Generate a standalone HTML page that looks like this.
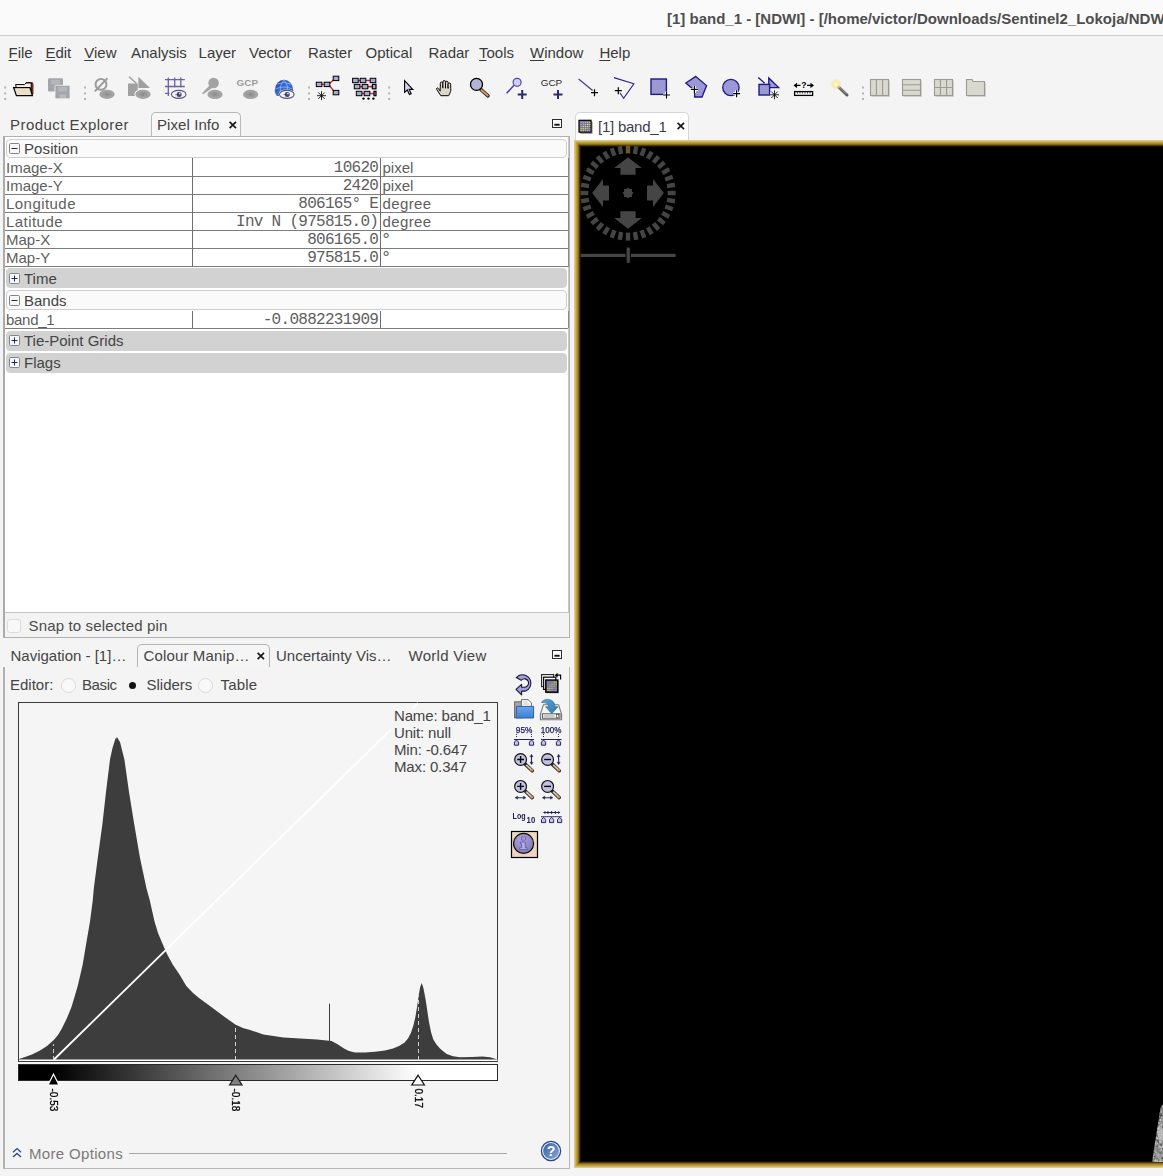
<!DOCTYPE html>
<html>
<head>
<meta charset="utf-8">
<title>SNAP</title>
<style>
html,body{margin:0;padding:0;}
body{width:1163px;height:1176px;overflow:hidden;background:#f4f4f4;font-family:"Liberation Sans",sans-serif;font-size:15px;color:#3a3a3a;position:relative;}
.a{position:absolute;}
.t{position:absolute;white-space:nowrap;line-height:18px;height:18px;}
.m{font-family:"Liberation Mono",monospace;font-size:16px;letter-spacing:-0.72px;margin-top:0.5px;margin-right:0.8px;}
u{text-decoration:underline;text-underline-offset:2px;text-decoration-thickness:1px;}
/* title */
#titlebar{left:0;top:0;width:1163px;height:35px;background:#fafafa;border-bottom:1px solid #cdcdcd;}
#title{left:667px;top:9.5px;font-weight:bold;font-size:15px;color:#4e4e4e;}
/* menu */
.mi{top:43.8px;color:#3a3a3a;}
/* panels */
.panel{border:1px solid #b4b4b4;box-sizing:border-box;}
.hdr{position:absolute;left:6px;width:561px;box-sizing:border-box;border-radius:4px;}
.hdr.w{background:#fafafa;border:1px solid #cfcfcf;}
.hdr.g{background:#d2d2d2;border:1px solid #d2d2d2;}
.row{position:absolute;left:5px;width:563px;height:18px;box-sizing:border-box;border-bottom:1px solid #7d7d7d;background:#fff;}
.lbl{color:#5e5e5e;}
</style>
</head>
<body>
<!-- TITLE -->
<div class="a" id="titlebar"></div>
<div class="t" id="title">[1] band_1 - [NDWI] - [/home/victor/Downloads/Sentinel2_Lokoja/NDWI</div>

<!-- MENU -->
<div id="menu">
<div class="t mi" style="left:8.5px"><u>F</u>ile</div>
<div class="t mi" style="left:45.4px"><u>E</u>dit</div>
<div class="t mi" style="left:84.3px"><u>V</u>iew</div>
<div class="t mi" style="left:131px">Analysis</div>
<div class="t mi" style="left:198.6px">Layer</div>
<div class="t mi" style="left:249px">Vector</div>
<div class="t mi" style="left:308px">Raster</div>
<div class="t mi" style="left:365.6px">Optical</div>
<div class="t mi" style="left:428.5px">Radar</div>
<div class="t mi" style="left:479px"><u>T</u>ools</div>
<div class="t mi" style="left:530px"><u>W</u>indow</div>
<div class="t mi" style="left:599.4px"><u>H</u>elp</div>
</div>

<!-- TOOLBAR -->
<div id="toolbar">
<svg class="a" style="left:0;top:66px" width="1163" height="46" viewBox="0 66 1163 46">
<defs>
<g id="grip"><rect x="-1" y="86.5" width="2" height="2" fill="#b4b4b4"/><rect x="-1" y="92.5" width="2" height="2" fill="#b4b4b4"/><rect x="-1" y="98" width="2" height="2" fill="#b4b4b4"/></g>
<g id="eyeG"><ellipse cx="0" cy="0" rx="7.6" ry="4.6" fill="#a4a4a4"/><ellipse cx="0" cy="0" rx="4.6" ry="2.4" fill="#9a9a9a"/><circle cx="0" cy="0" r="1.6" fill="#8e8e8e"/></g>
<g id="eyeC"><ellipse cx="0" cy="0" rx="7.3" ry="4" fill="#f4f4fa" stroke="#55557a" stroke-width="1.1"/><circle cx="0.4" cy="0" r="2.5" fill="#44446a"/><circle cx="-2.8" cy="0.2" r="0.6" fill="#55557a"/><circle cx="1.1" cy="-0.8" r="0.9" fill="#d4d4ea"/></g>
<g id="plusB"><path d="M-4.5 0H4.5M0 -4.5V4.5" stroke="#2a286e" stroke-width="2" fill="none"/></g>
<g id="plusK"><path d="M-3.5 0H3.5M0 -3.5V3.5" stroke="#fff" stroke-width="3" fill="none"/><path d="M-3.5 0H3.5M0 -3.5V3.5" stroke="#000" stroke-width="1.2" fill="none"/></g>
<g id="plusT"><path d="M-3.5 0H3.5M0 -3.5V3.5" stroke="#000" stroke-width="1.2" fill="none"/></g>
<g id="ast"><path d="M-4.5 0H4.5M0 -4.5V4.5M-3.2 -3.2L3.2 3.2M-3.2 3.2L3.2 -3.2" stroke="#000" stroke-width="0.85" fill="none"/></g>
<g id="node"><rect x="0" y="0" width="5.6" height="4.4" fill="#a8a8d4" stroke="#000" stroke-width="1"/></g>
<radialGradient id="wg"><stop offset="0" stop-color="#fffbe0"/><stop offset="0.45" stop-color="#fbe9a0" stop-opacity="0.9"/><stop offset="1" stop-color="#f8e090" stop-opacity="0"/></radialGradient>
<linearGradient id="globe" x1="0" y1="0" x2="1" y2="1"><stop offset="0" stop-color="#1c3c9c"/><stop offset="0.55" stop-color="#3f74dc"/><stop offset="1" stop-color="#1a3aa0"/></linearGradient>
</defs>
<use href="#grip" x="5.2"/><use href="#grip" x="85"/><use href="#grip" x="309"/><use href="#grip" x="389.2"/><use href="#grip" x="863"/>
<!-- open folder -->
<g>
<path d="M26 82.600h6.200l0.800 0.800v10.800h-2.500z" fill="#9a3030" stroke="#4a1010" stroke-width="0.800"/>
<path d="M15.600 84.600h8.800l1.600 -1.600h5.200v11.400h-13.600z" fill="#f8f2e2" stroke="#000" stroke-width="1"/>
<path d="M13.600 87.600h16.400l2.400 8h-16z" fill="#e2d2b4" stroke="#000" stroke-width="1.200"/>
<path d="M15.400 89h13.600M15.900 90.800h13.600M16.500 92.600h13.600M17 94.300h13.600" stroke="#faf4e6" stroke-width="0.700"/>
</g>
<!-- disks grey -->
<g fill="#a2a6aa">
<rect x="48" y="78.3" width="15" height="13.2" rx="1.2"/>
<rect x="55" y="85.3" width="15" height="13.5" rx="1.2" stroke="#f4f4f4" stroke-width="0.8"/>
<rect x="51" y="79.8" width="9" height="4.6" fill="#b4b7ba"/>
<rect x="58.2" y="87" width="9" height="4.6" fill="#b4b7ba"/>
<rect x="59.5" y="94.5" width="6.5" height="3.4" fill="#b8bbbd"/>
</g>
<!-- nodata overlay (grey) -->
<g stroke="#9c9c9c" fill="none" stroke-width="2"><circle cx="101" cy="84.4" r="5.4"/><path d="M94.8 91.4L107.4 78.2"/></g>
<use href="#eyeG" x="107" y="94.3"/>
<!-- no-data 2 grey -->
<g fill="#a0a0a0"><path d="M128 83.5h9.8v12.5h-9.8z"/><path d="M138.4 76.8L150 88h-11.6z"/><path d="M128.6 77.2l1-1L137 83l-1 1z"/></g>
<ellipse cx="143" cy="94.3" rx="8.6" ry="5.6" fill="#f4f4f4"/><use href="#eyeG" x="143" y="94.3"/>
<!-- graticule + eye -->
<g stroke="#6a62a0" stroke-width="1.3" fill="none"><path d="M168.3 77.5V96M174.7 77.5V87.5M180.8 77.5V87.5M165 79.7H184.8M165 86.5H184.8M165 93.4H169.5"/></g>
<use href="#eyeC" x="178.7" y="94.4"/>
<!-- pin + eye grey -->
<g fill="#a2a2a2"><circle cx="213.6" cy="83" r="5.3"/><path d="M209.5 85.5l2.6 2.4l-9 6.3l-1 -1z"/></g>
<use href="#eyeG" x="215" y="94.4"/>
<!-- GCP + eye grey -->
<text x="236.6" y="85.6" font-family="Liberation Sans, sans-serif" font-size="9.4" font-weight="bold" fill="#9c9c9c" textLength="21.4" lengthAdjust="spacingAndGlyphs">GCP</text>
<use href="#eyeG" x="250.6" y="94.4"/>
<!-- world + eye -->
<path d="M274.8 90.5a9.2 10.8 0 0 1 18.4 0c0 2 -1 4 -2 5.5h-14.4c-1 -1.5 -2 -3.5 -2 -5.5z" fill="url(#globe)"/>
<path d="M277 84q7 -3 14 0M275.5 89q8.5 -4 17 0M284 79.5q-5 6 -4 14M284 79.5q5 6 4 14" stroke="#9cc0f4" stroke-width="0.7" fill="none"/>
<ellipse cx="286.8" cy="94.4" rx="8.2" ry="5" fill="#f4f4f4"/><use href="#eyeC" x="286.8" y="94.4"/>
<!-- graph builder -->
<g stroke="#c43030" stroke-width="1.4" fill="none"><path d="M319 84.4H327M329 84L335 78.5M329 85L335 92.5"/></g>
<use href="#node" x="316.3" y="82.2"/><use href="#node" x="324.2" y="82.2"/><use href="#node" x="333.2" y="76.2"/><use href="#node" x="333.2" y="90.4"/>
<use href="#ast" x="321.5" y="95.7"/>
<!-- batch -->
<g stroke="#c43030" stroke-width="1.6" fill="none"><path d="M355 80.5H374M357 86.6H375M359 93.5H375"/></g>
<use href="#node" x="352.6" y="78.3"/><use href="#node" x="360.2" y="78.3"/><use href="#node" x="370.2" y="78.3"/>
<use href="#node" x="354.3" y="84.4"/><use href="#node" x="362.2" y="84.4"/><rect x="372.4" y="84.4" width="3.6" height="4.4" fill="#a8a8d4" stroke="#000" stroke-width="1.2"/>
<use href="#node" x="356.3" y="91.3"/><use href="#node" x="364.2" y="91.3"/><rect x="374" y="91.3" width="2" height="4.4" fill="#a8a8d4" stroke="#000" stroke-width="1.2"/>
<g fill="#000"><circle cx="363.5" cy="98.6" r="1.2"/><circle cx="368.5" cy="98.6" r="1.2"/><circle cx="373.4" cy="98.6" r="1.2"/></g>
<!-- select arrow -->
<path d="M404.6 80.6V92.4L407.3 90L409.4 94.6L411.2 93.8L409.2 89.4H412.8z" fill="#d4d4f0" stroke="#000" stroke-width="1.1" stroke-linejoin="miter"/>
<!-- hand -->
<g fill="#ddd6c6" stroke="#000" stroke-width="1">
<rect x="440.300" y="82" width="2.600" height="9" rx="1.300"/><rect x="442.900" y="80.600" width="2.600" height="10" rx="1.300"/><rect x="445.500" y="81.200" width="2.600" height="10" rx="1.300"/><rect x="448.100" y="83" width="2.600" height="9" rx="1.300"/>
<path d="M440.300 87.500V91.200L438.300 88.400C437.500 87.300 436 88.200 436.700 89.400L440.800 95.700H448.600C450.200 93.200 450.700 91 450.700 88.500" />
</g>
<path d="M440.800 88h9.400v4h-9.400z" fill="#ddd6c6"/>
<path d="M442.900 86.500v2M445.500 86.500v2M448.100 87v2" stroke="#000" stroke-width="0.700" fill="none"/>
<!-- magnifier -->
<path d="M481 89.6L488 95.8" stroke="#403020" stroke-width="3.6" stroke-linecap="round"/>
<path d="M481.6 90.2L487.6 95.4" stroke="#d8a070" stroke-width="1.8" stroke-linecap="round"/>
<circle cx="476.5" cy="84.4" r="6" fill="#b4b4d8" stroke="#000" stroke-width="1.3"/>
<!-- pin + plus -->
<path d="M514 85.2L506.6 93.3" stroke="#4a449c" stroke-width="1.5"/>
<circle cx="517.1" cy="82.3" r="4" fill="#cfcff0" stroke="#504a9c" stroke-width="1.2"/>
<use href="#plusB" x="522.2" y="94.5"/>
<!-- GCP plus -->
<text x="540.8" y="85.6" font-family="Liberation Sans, sans-serif" font-size="9.4" fill="#2c2c2c" textLength="21.4" lengthAdjust="spacingAndGlyphs">GCP</text>
<use href="#plusB" x="558" y="94.5"/>
<!-- line -->
<path d="M578.6 79L592.6 90.6" stroke="#4a3f9c" stroke-width="1.3"/><use href="#plusT" x="594.5" y="92.7"/>
<!-- polyline -->
<path d="M613.9 77.6L633.9 83.8L623.6 98.2L619.9 92.8" stroke="#2a1f8c" stroke-width="1.1" fill="none"/><use href="#plusT" x="618.3" y="90.7"/>
<!-- rect -->
<rect x="651" y="79" width="15.4" height="15.4" fill="#9c98d6" stroke="#1f1a80" stroke-width="1.4"/><use href="#plusK" x="666.5" y="95"/>
<!-- polygon -->
<path d="M695.8 76.4L706.6 85.6L702 97H694.6V90.6L685.8 83z" fill="#9c98d6" stroke="#1f1a80" stroke-width="1.3"/><use href="#plusK" x="694.4" y="89.4"/>
<!-- ellipse -->
<circle cx="730.9" cy="87.5" r="8.2" fill="#9c98d6" stroke="#1f1a80" stroke-width="1.3"/><use href="#plusK" x="736.6" y="93.7"/>
<!-- magic -->
<path d="M758.3 77.6L764.6 83.2" stroke="#1f1a80" stroke-width="1.4"/>
<path d="M768.8 78L778.6 87.6H768.8z" fill="#9c98d6" stroke="#1f1a80" stroke-width="1.4"/>
<rect x="759" y="84.4" width="10.6" height="10.6" fill="#9c98d6" stroke="#1f1a80" stroke-width="1.4"/>
<circle cx="774.5" cy="94.8" r="4.6" fill="#f4f4f4"/><use href="#ast" x="774.5" y="94.8"/>
<!-- ruler -->
<g stroke="#000" fill="none"><path d="M794.5 85.4H800.5M807 85.4H813" stroke-width="1.2"/><path d="M797 83.4L794.4 85.4L797 87.4M810.5 83.4L813.1 85.4L810.5 87.4" stroke-width="1.1" fill="#000"/>
<rect x="794.6" y="91.6" width="18" height="3.8" fill="#fff" stroke-width="1.3"/><path d="M797.5 91.6v2M800 91.6v2M802.5 91.6v2M805 91.6v2M807.5 91.6v2M810 91.6v2" stroke-width="0.7"/></g>
<text x="801.2" y="88" font-family="Liberation Sans, sans-serif" font-size="8.5" font-weight="bold" fill="#000">?</text>
<!-- wand -->
<path d="M838.6 87L847 95" stroke="#5a5a5a" stroke-width="3" stroke-linecap="round"/><path d="M838.6 86.4L846.6 94" stroke="#a8a8a8" stroke-width="1"/>
<circle cx="836" cy="84.4" r="6" fill="url(#wg)"/>
<!-- tiles -->
<g fill="#000" opacity="0.13"><rect x="871.5" y="80.5" width="18.5" height="16.5"/><rect x="903.5" y="80.5" width="18.5" height="16.5"/><rect x="935.5" y="80.5" width="18.5" height="16.5"/><rect x="967.5" y="82.5" width="18.5" height="14.5"/></g>
<g fill="#d9d9ce" stroke="#9a9a96" stroke-width="1.1">
<rect x="870.5" y="79.5" width="18" height="16"/><path d="M876.4 79.5v16M882.6 79.5v16" fill="none"/>
<rect x="902.5" y="79.5" width="18" height="16"/><path d="M902.5 84.8h18M902.5 90.2h18" fill="none"/>
<rect x="934.5" y="79.5" width="18" height="16"/><path d="M940.4 79.5v16M946.6 79.5v16M934.5 87.5h18" fill="none"/>
<path d="M966.5 79.5h5.5l1.2 2h11.3v14h-18z"/>
</g>
</svg>
</div>

<!-- LEFT TOP PANEL -->
<div id="lefttop">
<!-- tabs -->
<div class="t" style="left:10px;top:115.5px;color:#444;letter-spacing:0.46px">Product Explorer</div>
<div class="a" style="left:151px;top:112px;width:90px;height:26px;box-sizing:border-box;border:1px solid #b9b9b9;border-bottom:none;border-radius:5px 5px 0 0;background:#f7f7f7"></div>
<div class="t" style="left:157px;top:115.5px;color:#444;letter-spacing:0.08px">Pixel Info</div>
<svg class="a" style="left:228px;top:120px" width="10" height="10" viewBox="0 0 10 10"><path d="M1.6 1.8L8 8.2M8 1.8L1.6 8.2" stroke="#1a1a1a" stroke-width="1.7"/></svg>
<svg class="a" style="left:552px;top:118px" width="12" height="12" viewBox="0 0 12 12"><rect x="0.5" y="1.5" width="9" height="8" fill="#fbfbfb" stroke="#2c2c2c" stroke-width="1"/><rect x="2.4" y="5.8" width="5.2" height="1.9" fill="#111"/></svg>
<!-- panel frame -->
<div class="a" style="left:3px;top:136px;width:567px;height:502px;box-sizing:border-box;border:1px solid #b2b2b2;border-left:2px solid #ababab;background:#f3f3f3"></div>
<div class="a" style="left:5px;top:137px;width:564px;height:476px;background:#fff;border-bottom:1px solid #c4c4c4;border-right:1px solid #c9c9c9;box-sizing:border-box"></div>
<!-- Position header -->
<div class="hdr w" style="top:138.5px;height:19px"></div>
<svg class="a" style="left:9px;top:143px" width="11" height="11" viewBox="0 0 11 11"><rect x="0.5" y="0.5" width="10" height="10" rx="1.2" fill="#f6f6fb" stroke="#858585"/><path d="M2.5 5.5H8.5" stroke="#1c2a5a" stroke-width="1"/></svg>
<div class="t" style="left:24px;top:139.5px;color:#444;letter-spacing:0.1px">Position</div>
<!-- rows -->
<div class="a" style="left:5px;top:158px;width:563px;height:1px;background:#fff"></div>
<div class="row" style="top:159px"></div><div class="row" style="top:177px"></div><div class="row" style="top:195px"></div><div class="row" style="top:213px"></div><div class="row" style="top:231px"></div><div class="row" style="top:249px"></div>
<div class="a" style="left:192px;top:158px;width:1px;height:109px;background:#6e6e6e"></div>
<div class="a" style="left:380px;top:158px;width:1px;height:109px;background:#6e6e6e"></div>
<div class="a" style="left:567.5px;top:158px;width:1px;height:109px;background:#8a8a8a"></div>
<div class="t lbl" style="left:6px;top:158.6px">Image-X</div>
<div class="t lbl" style="left:6px;top:176.6px">Image-Y</div>
<div class="t lbl" style="left:6px;top:194.6px;letter-spacing:0.45px">Longitude</div>
<div class="t lbl" style="left:6px;top:212.6px;letter-spacing:0.45px">Latitude</div>
<div class="t lbl" style="left:6px;top:230.6px">Map-X</div>
<div class="t lbl" style="left:6px;top:248.6px">Map-Y</div>
<div class="t lbl m" style="right:784px;top:158.6px">10620</div>
<div class="t lbl m" style="right:784px;top:176.6px">2420</div>
<div class="t lbl m" style="right:784px;top:194.6px">806165° E</div>
<div class="t lbl m" style="right:784px;top:212.6px">Inv N (975815.0)</div>
<div class="t lbl m" style="right:784px;top:230.6px">806165.0</div>
<div class="t lbl m" style="right:784px;top:248.6px">975815.0</div>
<div class="t lbl" style="left:382.5px;top:158.6px">pixel</div>
<div class="t lbl" style="left:382.5px;top:176.6px">pixel</div>
<div class="t lbl" style="left:382.5px;top:194.6px;letter-spacing:0.38px">degree</div>
<div class="t lbl" style="left:382.5px;top:212.6px;letter-spacing:0.38px">degree</div>
<div class="t lbl" style="left:382.5px;top:230.6px;font-size:18px">°</div>
<div class="t lbl" style="left:382.5px;top:248.6px;font-size:18px">°</div>
<!-- Time -->
<div class="hdr g" style="top:268px;height:20px"></div>
<svg class="a" style="left:9px;top:273px" width="11" height="11" viewBox="0 0 11 11"><rect x="0.5" y="0.5" width="10" height="10" rx="1.2" fill="#f6f6fb" stroke="#858585"/><path d="M2.5 5.5H8.5M5.5 2.5V8.5" stroke="#1c2a5a" stroke-width="1"/></svg>
<div class="t" style="left:24px;top:269.5px;color:#444">Time</div>
<!-- Bands -->
<div class="hdr w" style="top:290px;height:19.5px"></div>
<svg class="a" style="left:9px;top:295px" width="11" height="11" viewBox="0 0 11 11"><rect x="0.5" y="0.5" width="10" height="10" rx="1.2" fill="#f6f6fb" stroke="#858585"/><path d="M2.5 5.5H8.5" stroke="#1c2a5a" stroke-width="1"/></svg>
<div class="t" style="left:24px;top:291.5px;color:#444">Bands</div>
<div class="row" style="top:311px"></div>
<div class="a" style="left:192px;top:311px;width:1px;height:17px;background:#6e6e6e"></div>
<div class="a" style="left:380px;top:311px;width:1px;height:17px;background:#6e6e6e"></div>
<div class="a" style="left:567.5px;top:311px;width:1px;height:17px;background:#8a8a8a"></div>
<div class="t lbl" style="left:6px;top:310.6px;letter-spacing:-0.28px">band_1</div>
<div class="t lbl m" style="right:784px;top:310.6px">-0.0882231909</div>
<!-- Tie-point -->
<div class="hdr g" style="top:330.5px;height:20px"></div>
<svg class="a" style="left:9px;top:335px" width="11" height="11" viewBox="0 0 11 11"><rect x="0.5" y="0.5" width="10" height="10" rx="1.2" fill="#f6f6fb" stroke="#858585"/><path d="M2.5 5.5H8.5M5.5 2.5V8.5" stroke="#1c2a5a" stroke-width="1"/></svg>
<div class="t" style="left:24px;top:331.5px;color:#444">Tie-Point Grids</div>
<!-- Flags -->
<div class="hdr g" style="top:352.5px;height:20px"></div>
<svg class="a" style="left:9px;top:357px" width="11" height="11" viewBox="0 0 11 11"><rect x="0.5" y="0.5" width="10" height="10" rx="1.2" fill="#f6f6fb" stroke="#858585"/><path d="M2.5 5.5H8.5M5.5 2.5V8.5" stroke="#1c2a5a" stroke-width="1"/></svg>
<div class="t" style="left:24px;top:353.5px;color:#444">Flags</div>
<!-- snap -->
<div class="a" style="left:7px;top:618.5px;width:14px;height:14px;box-sizing:border-box;border:1px solid #dcdcdc;border-radius:3px;background:#f8f8f8"></div>
<div class="t" style="left:28.5px;top:616.5px;color:#4a4a4a;letter-spacing:0.15px">Snap to selected pin</div>
</div>

<!-- LEFT BOTTOM PANEL -->
<div id="leftbottom">
<!-- tabs -->
<div class="t" style="left:10.5px;top:647.4px;color:#444">Navigation - [1]…</div>
<div class="a" style="left:136.5px;top:643.5px;width:133px;height:23px;box-sizing:border-box;border:1px solid #b4b4b4;border-bottom:none;border-radius:5px 5px 0 0;background:#f5f5f5"></div>
<div class="t" style="left:143.5px;top:647.4px;color:#444;letter-spacing:0.14px">Colour Manip…</div>
<svg class="a" style="left:255.5px;top:651px" width="10" height="10" viewBox="0 0 10 10"><path d="M1.6 1.8L8 8.2M8 1.8L1.6 8.2" stroke="#1a1a1a" stroke-width="1.7"/></svg>
<div class="t" style="left:276px;top:647.4px;color:#444">Uncertainty Vis…</div>
<div class="t" style="left:408.5px;top:647.4px;color:#444;letter-spacing:0.27px">World View</div>
<svg class="a" style="left:552px;top:649px" width="12" height="12" viewBox="0 0 12 12"><rect x="0.5" y="1.5" width="9" height="8" fill="#fbfbfb" stroke="#2c2c2c" stroke-width="1"/><rect x="2.4" y="5.8" width="5.2" height="1.9" fill="#111"/></svg>
<!-- frame -->
<div class="a" style="left:3px;top:667px;width:567px;height:502px;box-sizing:border-box;border:1px solid #b8b8b8;border-left:2px solid #b0b0b0;border-top:none;"></div>
<!-- editor row -->
<div class="t" style="left:10px;top:675.5px;color:#444">Editor:</div>
<div class="a" style="left:60.5px;top:677.5px;width:15px;height:15px;box-sizing:border-box;border:1px solid #d9d9d9;border-radius:50%;background:#f9f9f9"></div>
<div class="t" style="left:82px;top:675.5px;color:#444;letter-spacing:-0.4px">Basic</div>
<div class="a" style="left:129px;top:681.5px;width:7px;height:7px;border-radius:50%;background:#111"></div>
<div class="t" style="left:146.5px;top:675.5px;color:#444">Sliders</div>
<div class="a" style="left:198px;top:677.5px;width:15px;height:15px;box-sizing:border-box;border:1px solid #d9d9d9;border-radius:50%;background:#f9f9f9"></div>
<div class="t" style="left:220.5px;top:675.5px;color:#444;letter-spacing:0.2px">Table</div>
<!-- histogram -->
<svg class="a" style="left:0;top:695px" width="575" height="430" viewBox="0 695 575 430">
<defs><linearGradient id="cb" gradientUnits="userSpaceOnUse" x1="53.5" y1="0" x2="418" y2="0"><stop offset="0" stop-color="#000"/><stop offset="1" stop-color="#fff"/></linearGradient></defs>
<rect x="18.5" y="702.5" width="479" height="359" fill="#f5f5f5" stroke="#3a3a3a" stroke-width="1"/>
<path id="hist" fill="#3d3d3d" d="M19 1060L19 1059L25 1057L32 1054.5L40 1050.5L47 1046L54 1039.7L58 1035L61.6 1029L67 1018L71.3 1007.5L74.5 997L77.7 986L80.3 975L82.7 964.5L86.3 943L90 921.5L92.8 900L93.8 888.5L97.5 860L102.4 824L106 792L110 759.5L112.5 748L115 740L116.3 737L116.8 739L117.5 737.3L118.4 739.5L120 742L122 750L124.4 759.5L129 792L134.2 824L140 858L146.5 888.5L149.7 900L154.5 921.5L158 933L162.2 943L167 954L172.7 964.5L179.8 975L186.3 986L192.5 992.5L199 998L212 1007.5L224 1016.5L235.7 1024.7L243 1028L250 1030L263.4 1034.5L283.5 1037.6L317 1039.4L331.6 1041L338 1044.5L344 1048.4L349 1051L355 1052.4L365 1052.6L375 1051.7L385 1050.5L393 1048.4L399 1046L404.3 1042.8L408 1038.5L411 1032.7L413.4 1025.5L415.4 1017L417.2 1006L418.8 994.7L420.2 987L421.7 983L423.4 988L425.5 999L427.2 1010L428.9 1021.5L431 1032L433.3 1039.4L436.5 1044.5L440 1048.4L443.5 1051.5L446.7 1054L453 1056.2L460 1057.3L472 1057L482.5 1056.4L490 1057.2L496 1058.9L497.5 1059.5L497.5 1060Z"/>
<rect x="329" y="1003.7" width="1" height="38" fill="#3d3d3d"/>
<path d="M53.5 1060L418 703" stroke="#fff" stroke-width="1.8" fill="none"/>
<path d="M19 1060.2H497.5" stroke="#fff" stroke-width="1.4"/>
<g stroke="#d0d0d0" stroke-width="1" stroke-dasharray="4 3" fill="none"><path d="M53.5 1060V1044"/><path d="M235.5 1060V1025"/><path d="M418.5 1060V994"/></g>
<rect x="18.5" y="1064.5" width="479" height="16" fill="url(#cb)" stroke="#2a2a2a" stroke-width="1"/>
<path d="M53.5 1074.6L58.6 1084.6H48.4z" fill="#000" stroke="#fff" stroke-width="1.6"/><path d="M53.5 1075.6L58 1084.6H49z" fill="#000"/>
<path d="M235.8 1075.2L242 1085H229.6z" fill="#808080" stroke="#1a1a1a" stroke-width="1.2"/>
<path d="M418.1 1075.2L424.4 1085H411.8z" fill="#fff" stroke="#0a0a0a" stroke-width="1.2"/>
<g font-family="Liberation Sans, sans-serif" font-size="10" fill="#000" stroke="#000" stroke-width="0.3" opacity="0.999">
<text transform="translate(50 1088.5) rotate(90)">-0.53</text>
<text transform="translate(232.2 1088.5) rotate(90)">-0.18</text>
<text transform="translate(414.6 1088.5) rotate(90)">0.17</text>
</g>
</svg>
<!-- legend -->
<div class="a" style="left:391px;top:708px;width:102px;height:68px;background:#f5f5f5"></div>
<div class="t" style="left:394px;top:707px;color:#444;line-height:17px;height:auto;letter-spacing:-0.15px">Name: band_1<br>Unit: null<br>Min: -0.647<br>Max: 0.347</div>
<svg class="a" style="left:505px;top:668px" width="66" height="196" viewBox="505 668 66 196">
<defs>
<g id="house"><path d="M0 0.200L2.100 2.300V5.400H-2.100V2.300z" fill="#c4c0f0" stroke="#25255e" stroke-width="1"/></g>
<g id="lens"><path d="M4.6 4.6L11.6 11.2" stroke="#2a2a2a" stroke-width="3.6" stroke-linecap="round"/><path d="M5.6 5.4L11.3 10.8" stroke="#d6c0a0" stroke-width="1.9" stroke-linecap="butt"/><circle cx="11.2" cy="10.8" r="1.2" fill="#e88a5a"/><circle cx="0" cy="0" r="5.9" fill="#c2c0e4" stroke="#111" stroke-width="1.2"/></g>
<linearGradient id="bf" x1="0" y1="0" x2="0" y2="1"><stop offset="0" stop-color="#6aa6ea"/><stop offset="1" stop-color="#3f7fd0"/></linearGradient>
<linearGradient id="sa" x1="0" y1="0" x2="1" y2="1"><stop offset="0" stop-color="#5aa8d8"/><stop offset="1" stop-color="#2a78b0"/></linearGradient>
<radialGradient id="ig" cx="0.4" cy="0.3" r="0.8"><stop offset="0" stop-color="#aaa2dc"/><stop offset="1" stop-color="#8078b4"/></radialGradient>
<linearGradient id="ib" x1="0" y1="0" x2="0" y2="1"><stop offset="0" stop-color="#ecdcc0"/><stop offset="1" stop-color="#f0d0c4"/></linearGradient>
</defs>
<!-- undo -->
<path d="M516.200 677.600L519.400 675.300A8.200 8.200 0 1 1 525.500 691.100L521.600 691.100L521.600 694.900L516 689.300L521.600 684.400L521.600 687.200L524.400 687.200A4.200 4.200 0 1 0 521.200 680.300Z" fill="#a49ee0" stroke="#15152a" stroke-width="1.100" stroke-linejoin="round"/>
<!-- layers -->
<rect x="541.6" y="674.6" width="12" height="12" fill="#fff" stroke="#222" stroke-width="1.1"/>
<rect x="543.6" y="677.2" width="12.2" height="12.2" fill="#fff" stroke="#111" stroke-width="1.3"/>
<rect x="546.8" y="680.8" width="12" height="12.6" fill="#8a8a8a" opacity="0.6"/>
<rect x="545.8" y="680" width="12" height="12.2" fill="#6e6a8a" stroke="#000" stroke-width="1.4"/>
<rect x="547.30" y="681.50" width="1.2" height="1.2" fill="#a6a2c8"/><rect x="549.35" y="681.50" width="1.2" height="1.2" fill="#a6a2c8"/><rect x="551.40" y="681.50" width="1.2" height="1.2" fill="#a6a2c8"/><rect x="553.45" y="681.50" width="1.2" height="1.2" fill="#dcdc70"/><rect x="555.50" y="681.50" width="1.2" height="1.2" fill="#dcdc70"/><rect x="547.30" y="683.55" width="1.2" height="1.2" fill="#a6a2c8"/><rect x="549.35" y="683.55" width="1.2" height="1.2" fill="#a6a2c8"/><rect x="551.40" y="683.55" width="1.2" height="1.2" fill="#dcdc70"/><rect x="553.45" y="683.55" width="1.2" height="1.2" fill="#dcdc70"/><rect x="555.50" y="683.55" width="1.2" height="1.2" fill="#dcdc70"/><rect x="547.30" y="685.60" width="1.2" height="1.2" fill="#a6a2c8"/><rect x="549.35" y="685.60" width="1.2" height="1.2" fill="#dcdc70"/><rect x="551.40" y="685.60" width="1.2" height="1.2" fill="#dcdc70"/><rect x="553.45" y="685.60" width="1.2" height="1.2" fill="#dcdc70"/><rect x="555.50" y="685.60" width="1.2" height="1.2" fill="#a6a2c8"/><rect x="547.30" y="687.65" width="1.2" height="1.2" fill="#dcdc70"/><rect x="549.35" y="687.65" width="1.2" height="1.2" fill="#dcdc70"/><rect x="551.40" y="687.65" width="1.2" height="1.2" fill="#dcdc70"/><rect x="553.45" y="687.65" width="1.2" height="1.2" fill="#a6a2c8"/><rect x="555.50" y="687.65" width="1.2" height="1.2" fill="#a6a2c8"/><rect x="547.30" y="689.70" width="1.2" height="1.2" fill="#dcdc70"/><rect x="549.35" y="689.70" width="1.2" height="1.2" fill="#dcdc70"/><rect x="551.40" y="689.70" width="1.2" height="1.2" fill="#a6a2c8"/><rect x="553.45" y="689.70" width="1.2" height="1.2" fill="#a6a2c8"/><rect x="555.50" y="689.70" width="1.2" height="1.2" fill="#a6a2c8"/>
<path d="M560.6 679.6V675.2H556.4" stroke="#000" stroke-width="1.2" fill="none"/><path d="M557.6 672.8L554.6 675.2L557.6 677.6z" fill="#000"/>
<!-- open -->
<rect x="514.6" y="701.8" width="8" height="16" fill="#a6a6a6" stroke="#666" stroke-width="1"/>
<path d="M521.4 699.6h6.6l3.4 3.2v5.4h-10z" fill="#fafafa" stroke="#6a6a6a" stroke-width="1"/><path d="M523.4 702h4M523.4 704h5.6" stroke="#b8b8b8" stroke-width="0.8"/>
<path d="M516.6 706.4h17v11.6h-17.6z" fill="url(#bf)" stroke="#2c5ea8" stroke-width="1"/>
<!-- save -->
<path d="M543.4 704.8h15.2l3 9.6v5.4h-21.2v-5.4z" fill="#f6f6f6" stroke="#7a7a7a" stroke-width="1.1"/>
<rect x="542.4" y="713.8" width="17.6" height="4.4" fill="#fff" stroke="#555" stroke-width="1"/><rect x="543.6" y="715" width="11" height="2" fill="#c8c8c8"/><rect x="556.4" y="714.6" width="2.4" height="2.8" fill="#fff" stroke="#333" stroke-width="0.6"/>
<path d="M541.6 702.6c1 -3.4 8 -4.6 11.4 -1c1.6 1.8 2 3.400000000000001 2 5.2h3l-6.2 6.8l-6.2 -6.8h3.2c0 -2.4 -2.4 -4.6 -7.2 -4.2z" fill="url(#sa)" stroke="#2a6a9a" stroke-width="0.7"/>
<!-- 95% -->
<g font-family="Liberation Sans, sans-serif" font-size="8.2" fill="#1c1c58" stroke="#1c1c58" stroke-width="0.25" opacity="0.999">
<text x="515.8" y="732.6" textLength="16.6" lengthAdjust="spacingAndGlyphs" font-weight="normal">95%</text>
<text x="540.8" y="732.6" textLength="20.6" lengthAdjust="spacingAndGlyphs" font-weight="normal">100%</text>
</g>
<g stroke="#25255e" fill="none"><path d="M516.5 734v4M531.5 734v4M543.5 734v4M558.5 734v4" stroke-width="1" stroke-dasharray="1 1"/><path d="M514 739.5h20M541 739.5h20.600000000000001" stroke-width="1.2"/></g>
<use href="#house" x="516.5" y="739.8"/><use href="#house" x="531.5" y="739.8"/><use href="#house" x="543.5" y="739.8"/><use href="#house" x="558.5" y="739.8"/>
<!-- zooms -->
<use href="#lens" x="520.6" y="759.5"/><path d="M517.2 759.5h6.800000000000001M520.6 756.1v6.800000000000001" stroke="#000" stroke-width="1.4"/>
<use href="#lens" x="547.6" y="759.5"/><path d="M544.2 759.5h6.800000000000001" stroke="#000" stroke-width="1.4"/>
<use href="#lens" x="520.6" y="786.4"/><path d="M517.2 786.4h6.800000000000001M520.6 783v6.800000000000001" stroke="#000" stroke-width="1.4"/>
<use href="#lens" x="547.6" y="786.4"/><path d="M544.2 786.4h6.800000000000001" stroke="#000" stroke-width="1.4"/>
<g stroke="#2a2a5c" stroke-width="1.1" fill="#2a2a5c"><path d="M531.5 755.5v8M558.6 755.5v8M516.5 797.7h8M543.6 797.7h8"/>
<path d="M531.5 754.2l1.6 2.6h-3.2zM531.5 764.8l1.6 -2.6h-3.2zM558.6 754.2l1.6 2.6h-3.2zM558.6 764.8l1.6 -2.6h-3.2z" stroke-width="0.4"/>
<path d="M515 797.7l2.6 -1.6v3.2zM526 797.7l-2.6 -1.6v3.2zM542.2 797.7l2.6 -1.6v3.2zM553 797.7l-2.6 -1.6v3.2z" stroke-width="0.4"/></g>
<!-- Log10 -->
<text x="512.6" y="818.8" font-family="Liberation Sans, sans-serif" font-size="9.4" font-weight="bold" fill="#1c1c58" textLength="13" lengthAdjust="spacingAndGlyphs" opacity="0.999">Log</text>
<text x="526.6" y="822.8" font-family="Liberation Sans, sans-serif" font-size="9.2" font-weight="bold" fill="#1c1c58" textLength="8.6" lengthAdjust="spacingAndGlyphs" opacity="0.999">10</text>
<!-- even -->
<g stroke="#25255e" stroke-width="1.1" fill="none"><path d="M544 812.5h15.5M541 816.8h20.8"/><path d="M548 811v3M551.6 811v3M555.4 811v3" stroke-width="1"/></g>
<path d="M543 812.5l2.4 -1.5v3zM560.4 812.5l-2.4 -1.5v3z" fill="#25255e"/>
<use href="#house" x="543.6" y="817.2"/><use href="#house" x="551.6" y="817.2"/><use href="#house" x="559.6" y="817.2"/>
<!-- info -->
<rect x="511.5" y="831.5" width="26" height="26" fill="url(#ib)" stroke="#000" stroke-width="1.2"/>
<circle cx="523.6" cy="843.4" r="10" fill="url(#ig)" stroke="#111" stroke-width="1.2"/>
<path d="M521.6 837h3.8v3h-3.8zM520.4 842h4.8v5.8h2v1.8h-7.6v-1.8h2v-4h-1.2z" fill="#b8b0e0" stroke="#5a4a98" stroke-width="0.7"/>
</svg>
<!-- help -->
<svg class="a" style="left:538px;top:1138px" width="26" height="26" viewBox="-13 -13 26 26">
<defs><linearGradient id="hg" x1="0" y1="0" x2="1" y2="1"><stop offset="0" stop-color="#3562aa"/><stop offset="1" stop-color="#86a4dc"/></linearGradient></defs>
<circle cx="0" cy="0" r="9.6" fill="#e8f0fc" stroke="#2a4780" stroke-width="1.3"/>
<circle cx="0" cy="0" r="7.9" fill="url(#hg)"/>
<text x="0" y="5" text-anchor="middle" font-family="Liberation Sans, sans-serif" font-size="14" font-weight="bold" fill="#fff">?</text>
</svg>
<!-- more options -->
<svg class="a" style="left:11px;top:1147px" width="12" height="12" viewBox="0 0 12 12"><path d="M2 5.2L6 1.6L10 5.2M2 10L6 6.4L10 10" stroke="#2c4a88" stroke-width="1.4" fill="none"/></svg>
<div class="t" style="left:29px;top:1144.5px;color:#7a7a7a;letter-spacing:0.33px">More Options</div>
<div class="a" style="left:129px;top:1153px;width:378px;height:1px;background:#a8a8a8"></div>
</div>

<!-- IMAGE VIEW -->
<div id="view">

<!-- view tab -->
<div class="a" style="left:575px;top:112px;width:114px;height:29px;box-sizing:border-box;border:1px solid #d6d6d6;border-bottom:none;border-radius:5px 5px 0 0;background:#fff"></div>
<svg class="a" style="left:578px;top:119px" width="16" height="16" viewBox="0 0 16 16"><rect x="2.2" y="2.6" width="12.6" height="12.4" rx="1" fill="#000" opacity="0.28"/><rect x="1.6" y="2" width="12.6" height="12.4" fill="#000" opacity="0.25"/><rect x="1" y="1.3" width="12" height="11.8" fill="#77738f" stroke="#000" stroke-width="1.2"/><rect x="2.50" y="2.90" width="1.3" height="1.2" fill="#b0acd4"/><rect x="4.65" y="2.90" width="1.3" height="1.2" fill="#b0acd4"/><rect x="6.80" y="2.90" width="1.3" height="1.2" fill="#b0acd4"/><rect x="8.95" y="2.90" width="1.3" height="1.2" fill="#dcdc70"/><rect x="11.10" y="2.90" width="1.3" height="1.2" fill="#dcdc70"/><rect x="2.50" y="4.95" width="1.3" height="1.2" fill="#b0acd4"/><rect x="4.65" y="4.95" width="1.3" height="1.2" fill="#b0acd4"/><rect x="6.80" y="4.95" width="1.3" height="1.2" fill="#dcdc70"/><rect x="8.95" y="4.95" width="1.3" height="1.2" fill="#dcdc70"/><rect x="11.10" y="4.95" width="1.3" height="1.2" fill="#dcdc70"/><rect x="2.50" y="7.00" width="1.3" height="1.2" fill="#b0acd4"/><rect x="4.65" y="7.00" width="1.3" height="1.2" fill="#dcdc70"/><rect x="6.80" y="7.00" width="1.3" height="1.2" fill="#dcdc70"/><rect x="8.95" y="7.00" width="1.3" height="1.2" fill="#dcdc70"/><rect x="11.10" y="7.00" width="1.3" height="1.2" fill="#b0acd4"/><rect x="2.50" y="9.05" width="1.3" height="1.2" fill="#dcdc70"/><rect x="4.65" y="9.05" width="1.3" height="1.2" fill="#dcdc70"/><rect x="6.80" y="9.05" width="1.3" height="1.2" fill="#dcdc70"/><rect x="8.95" y="9.05" width="1.3" height="1.2" fill="#b0acd4"/><rect x="11.10" y="9.05" width="1.3" height="1.2" fill="#b0acd4"/><rect x="2.50" y="11.10" width="1.3" height="1.2" fill="#dcdc70"/><rect x="4.65" y="11.10" width="1.3" height="1.2" fill="#dcdc70"/><rect x="6.80" y="11.10" width="1.3" height="1.2" fill="#b0acd4"/><rect x="8.95" y="11.10" width="1.3" height="1.2" fill="#b0acd4"/><rect x="11.10" y="11.10" width="1.3" height="1.2" fill="#b0acd4"/></svg>
<div class="t" style="left:598px;top:117.500px;color:#3c3c4c;letter-spacing:-0.24px">[1] band_1</div>
<svg class="a" style="left:675.500px;top:121px" width="10" height="10" viewBox="0 0 10 10"><path d="M1.600 1.800L8 8.200M8 1.800L1.600 8.200" stroke="#1a1a1a" stroke-width="1.700"/></svg>
<!-- view -->
<div class="a" id="gold" style="left:574px;top:140px;width:620px;height:1028px;background:#000;box-shadow:inset 0 0 0 1px #dccb8e,inset 0 0 0 2px #cfb662,inset 0 0 0 3px #bf9f38,inset 0 0 0 4px #a98a28,inset 0 0 0 5px #86691a,inset 0 0 0 6px #4c3a0c,inset 0 0 0 7px #181204;">
<svg class="a" style="left:570px;top:960px" width="20" height="64" viewBox="1144 1100 20 64">
<defs><filter id="nz" x="0" y="0" width="1" height="1"><feTurbulence type="fractalNoise" baseFrequency="0.35" numOctaves="2" seed="7"/><feColorMatrix type="matrix" values="0 0 0 0 0.55  0 0 0 0 0.55  0 0 0 0 0.55  1.6 1.6 0 0 -1.0"/><feComposite in2="SourceGraphic" operator="in"/></filter></defs>
<path d="M1163 1104L1160.500 1108L1152 1162H1163z" fill="#3a3a3a"/>
<path d="M1163 1104L1160.500 1108L1152 1162H1163z" fill="#fff" filter="url(#nz)"/>
<path d="M1157 1128l3 -2l3 4v10l-4 3z" fill="#c8c8c8" opacity="0.700"/>
<path d="M1154 1150l4 -3l5 2v8l-8 2z" fill="#9a9a9a" opacity="0.600"/>
</svg>
</div>
<svg class="a" style="left:574px;top:140px" width="589" height="130" viewBox="574 140 589 130">
<g transform="translate(628 193)">
<rect x="-2.2" y="-47.6" width="4.4" height="8" fill="#6a5a22" transform="rotate(0)"/>
<rect x="-2.2" y="-47.6" width="4.4" height="8" fill="#454545" transform="rotate(10)"/>
<rect x="-2.2" y="-47.6" width="4.4" height="8" fill="#454545" transform="rotate(20)"/>
<rect x="-2.2" y="-47.6" width="4.4" height="8" fill="#454545" transform="rotate(30)"/>
<rect x="-2.2" y="-47.6" width="4.4" height="8" fill="#454545" transform="rotate(40)"/>
<rect x="-2.2" y="-47.6" width="4.4" height="8" fill="#454545" transform="rotate(50)"/>
<rect x="-2.2" y="-47.6" width="4.4" height="8" fill="#454545" transform="rotate(60)"/>
<rect x="-2.2" y="-47.6" width="4.4" height="8" fill="#454545" transform="rotate(70)"/>
<rect x="-2.2" y="-47.6" width="4.4" height="8" fill="#454545" transform="rotate(80)"/>
<rect x="-2.2" y="-47.6" width="4.4" height="8" fill="#454545" transform="rotate(90)"/>
<rect x="-2.2" y="-47.6" width="4.4" height="8" fill="#454545" transform="rotate(100)"/>
<rect x="-2.2" y="-47.6" width="4.4" height="8" fill="#454545" transform="rotate(110)"/>
<rect x="-2.2" y="-47.6" width="4.4" height="8" fill="#454545" transform="rotate(120)"/>
<rect x="-2.2" y="-47.6" width="4.4" height="8" fill="#454545" transform="rotate(130)"/>
<rect x="-2.2" y="-47.6" width="4.4" height="8" fill="#454545" transform="rotate(140)"/>
<rect x="-2.2" y="-47.6" width="4.4" height="8" fill="#454545" transform="rotate(150)"/>
<rect x="-2.2" y="-47.6" width="4.4" height="8" fill="#454545" transform="rotate(160)"/>
<rect x="-2.2" y="-47.6" width="4.4" height="8" fill="#454545" transform="rotate(170)"/>
<rect x="-2.2" y="-47.6" width="4.4" height="8" fill="#454545" transform="rotate(180)"/>
<rect x="-2.2" y="-47.6" width="4.4" height="8" fill="#454545" transform="rotate(190)"/>
<rect x="-2.2" y="-47.6" width="4.4" height="8" fill="#454545" transform="rotate(200)"/>
<rect x="-2.2" y="-47.6" width="4.4" height="8" fill="#454545" transform="rotate(210)"/>
<rect x="-2.2" y="-47.6" width="4.4" height="8" fill="#454545" transform="rotate(220)"/>
<rect x="-2.2" y="-47.6" width="4.4" height="8" fill="#454545" transform="rotate(230)"/>
<rect x="-2.2" y="-47.6" width="4.4" height="8" fill="#454545" transform="rotate(240)"/>
<rect x="-2.2" y="-47.6" width="4.4" height="8" fill="#454545" transform="rotate(250)"/>
<rect x="-2.2" y="-47.6" width="4.4" height="8" fill="#454545" transform="rotate(260)"/>
<rect x="-2.2" y="-47.6" width="4.4" height="8" fill="#454545" transform="rotate(270)"/>
<rect x="-2.2" y="-47.6" width="4.4" height="8" fill="#454545" transform="rotate(280)"/>
<rect x="-2.2" y="-47.6" width="4.4" height="8" fill="#454545" transform="rotate(290)"/>
<rect x="-2.2" y="-47.6" width="4.4" height="8" fill="#454545" transform="rotate(300)"/>
<rect x="-2.2" y="-47.6" width="4.4" height="8" fill="#454545" transform="rotate(310)"/>
<rect x="-2.2" y="-47.6" width="4.4" height="8" fill="#454545" transform="rotate(320)"/>
<rect x="-2.2" y="-47.6" width="4.4" height="8" fill="#454545" transform="rotate(330)"/>
<rect x="-2.2" y="-47.6" width="4.4" height="8" fill="#454545" transform="rotate(340)"/>
<rect x="-2.2" y="-47.6" width="4.4" height="8" fill="#454545" transform="rotate(350)"/>
<polygon points="5.60,0.00 3.88,1.61 3.96,3.96 1.61,3.88 0.00,5.60 -1.61,3.88 -3.96,3.96 -3.88,1.61 -5.60,0.00 -3.88,-1.61 -3.96,-3.96 -1.61,-3.88 -0.00,-5.60 1.61,-3.88 3.96,-3.96 3.88,-1.61" fill="#454545"/>
<path d="M0 -35.800L13.800 -25H7.600V-18.200H-7.600V-25H-13.800z" fill="#454545"/>
<path d="M0 35.800L13.800 25H7.600V18.200H-7.600V25H-13.800z" fill="#454545"/>
<path d="M-35.800 0L-25 -14V-7.600H-19V7.600H-25V14z" fill="#454545"/>
<path d="M35.800 0L25 -14V-7.600H19V7.600H25V14z" fill="#454545"/>
</g>
<rect x="580.600" y="253.800" width="95" height="3.200" fill="#454545"/>
<rect x="625.500" y="247.600" width="5.500" height="15.200" fill="#000"/>
<rect x="626.600" y="247.600" width="3.300" height="15.200" fill="#454545"/>
</svg>
</div>

</body>
</html>
